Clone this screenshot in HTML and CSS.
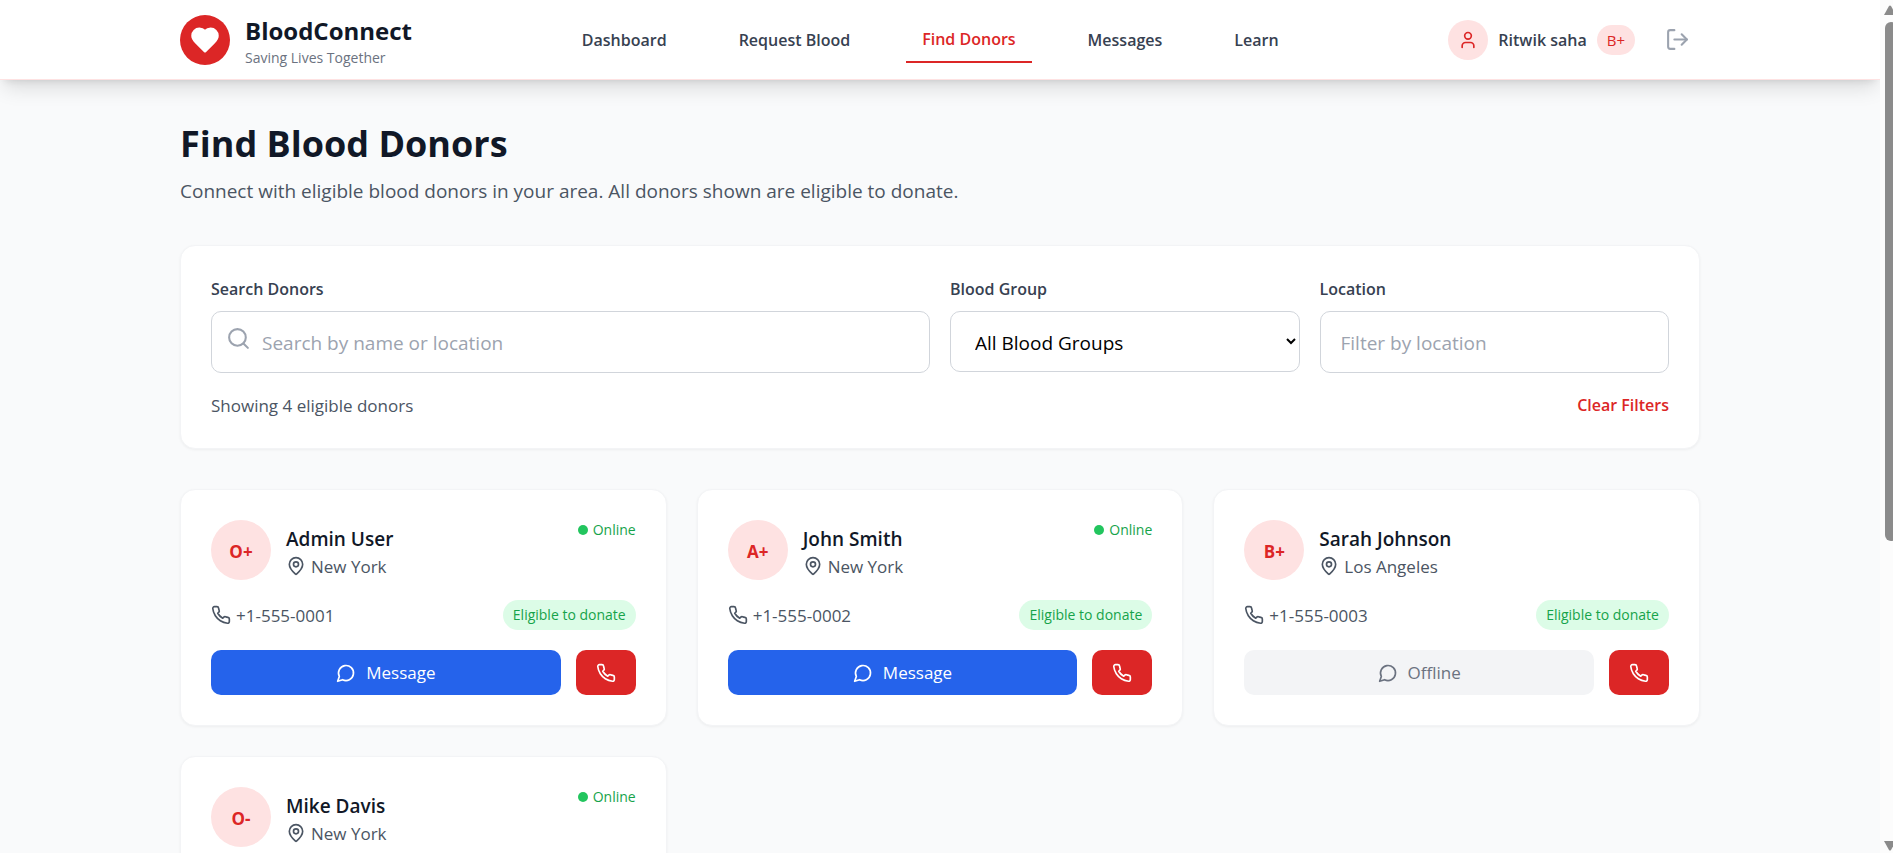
FILE: index.html
```html
<!DOCTYPE html>
<html lang="en">
<head>
<meta charset="utf-8">
<meta name="viewport" content="width=device-width, initial-scale=1">
<title>BloodConnect - Find Donors</title>
<link rel="stylesheet" href="styles.css">
</head>
<body>
<svg class="sprite" aria-hidden="true">
  <symbol id="i-heart" viewBox="0 0 24 24"><path d="M19 14c1.49-1.46 3-3.21 3-5.5A5.5 5.5 0 0 0 16.5 3c-1.76 0-3 .5-4.5 2-1.5-1.5-2.74-2-4.5-2A5.5 5.5 0 0 0 2 8.500c0 2.300 1.500 4.050 3 5.500l7 7Z"/></symbol>
  <symbol id="i-user" viewBox="0 0 24 24"><path d="M19 21v-2a4 4 0 0 0-4-4H9a4 4 0 0 0-4 4v2"/><circle cx="12" cy="7" r="4"/></symbol>
  <symbol id="i-logout" viewBox="0 0 24 24"><path d="M9 21H5a2 2 0 0 1-2-2V5a2 2 0 0 1 2-2h4"/><path d="m16 17 5-5-5-5"/><path d="M21 12H9"/></symbol>
  <symbol id="i-search" viewBox="0 0 24 24"><circle cx="11" cy="11" r="8"/><path d="m21 21-4.300-4.300"/></symbol>
  <symbol id="i-pin" viewBox="0 0 24 24"><path d="M20 10c0 4.993-5.539 10.193-7.399 11.799a1 1 0 0 1-1.202 0C9.539 20.193 4 14.993 4 10a8 8 0 0 1 16 0"/><circle cx="12" cy="10" r="3"/></symbol>
  <symbol id="i-phone" viewBox="0 0 24 24"><path d="M22 16.920v3a2 2 0 0 1-2.180 2 19.790 19.790 0 0 1-8.630-3.070 19.500 19.500 0 0 1-6-6 19.790 19.790 0 0 1-3.070-8.670A2 2 0 0 1 4.110 2h3a2 2 0 0 1 2 1.720 12.840 12.840 0 0 0 .700 2.810 2 2 0 0 1-.450 2.110L8.090 9.910a16 16 0 0 0 6 6l1.270-1.270a2 2 0 0 1 2.110-.450 12.840 12.840 0 0 0 2.810.700A2 2 0 0 1 22 16.920z"/></symbol>
  <symbol id="i-message" viewBox="0 0 24 24"><path d="M7.900 20A9 9 0 1 0 4 16.100L2 22Z"/></symbol>
</svg>
<div class="window">
  <div class="page">
    <header class="header">
      <div class="container header-row">
        <a class="brand" href="#">
          <span class="brand-mark"><svg class="icon icon-heart"><use href="#i-heart"/></svg></span>
          <span class="brand-text">
            <span class="brand-name">BloodConnect</span>
            <span class="brand-tag">Saving Lives Together</span>
          </span>
        </a>
        <nav class="nav">
          <a class="nav-link" href="#">Dashboard</a>
          <a class="nav-link" href="#">Request Blood</a>
          <a class="nav-link nav-link-active" href="#" aria-current="page">Find Donors</a>
          <a class="nav-link" href="#">Messages</a>
          <a class="nav-link" href="#">Learn</a>
        </nav>
        <div class="account">
          <span class="account-avatar"><svg class="icon"><use href="#i-user"/></svg></span>
          <span class="account-name">Ritwik saha</span>
          <span class="account-group">B+</span>
          <button class="logout" type="button" aria-label="Log out"><svg class="icon icon-lg"><use href="#i-logout"/></svg></button>
        </div>
      </div>
    </header>
    <main class="container main">
      <h1 class="title">Find Blood Donors</h1>
      <p class="lead">Connect with eligible blood donors in your area. All donors shown are eligible to donate.</p>
      <section class="filters">
        <div class="filter-grid">
          <div class="field field-wide">
            <label class="label" for="search">Search Donors</label>
            <div class="search">
              <svg class="icon icon-lg search-icon"><use href="#i-search"/></svg>
              <input class="control control-search" id="search" type="text" placeholder="Search by name or location">
            </div>
          </div>
          <div class="field">
            <label class="label" for="group">Blood Group</label>
            <select class="control control-select" id="group"><option>All Blood Groups</option><option>A+</option><option>B+</option><option>O+</option><option>O-</option></select>
          </div>
          <div class="field">
            <label class="label" for="location">Location</label>
            <input class="control" id="location" type="text" placeholder="Filter by location">
          </div>
        </div>
        <div class="filter-foot">
          <span>Showing 4 eligible donors</span>
          <button class="clear" type="button">Clear Filters</button>
        </div>
      </section>
      <section class="donors">
        <article class="card">
          <div class="card-top">
            <span class="group">O+</span>
            <div class="who">
              <h2 class="name">Admin User</h2>
              <p class="place"><svg class="icon"><use href="#i-pin"/></svg>New York</p>
            </div>
            <span class="online">Online</span>
          </div>
          <div class="card-mid">
            <span class="phone"><svg class="icon"><use href="#i-phone"/></svg>+1-555-0001</span>
            <span class="eligible">Eligible to donate</span>
          </div>
          <div class="actions">
            <button class="btn btn-message" type="button"><svg class="icon"><use href="#i-message"/></svg>Message</button>
            <button class="btn btn-call" type="button" aria-label="Call Admin User"><svg class="icon"><use href="#i-phone"/></svg></button>
          </div>
        </article>
        <article class="card">
          <div class="card-top">
            <span class="group">A+</span>
            <div class="who">
              <h2 class="name">John Smith</h2>
              <p class="place"><svg class="icon"><use href="#i-pin"/></svg>New York</p>
            </div>
            <span class="online">Online</span>
          </div>
          <div class="card-mid">
            <span class="phone"><svg class="icon"><use href="#i-phone"/></svg>+1-555-0002</span>
            <span class="eligible">Eligible to donate</span>
          </div>
          <div class="actions">
            <button class="btn btn-message" type="button"><svg class="icon"><use href="#i-message"/></svg>Message</button>
            <button class="btn btn-call" type="button" aria-label="Call John Smith"><svg class="icon"><use href="#i-phone"/></svg></button>
          </div>
        </article>
        <article class="card">
          <div class="card-top">
            <span class="group">B+</span>
            <div class="who">
              <h2 class="name">Sarah Johnson</h2>
              <p class="place"><svg class="icon"><use href="#i-pin"/></svg>Los Angeles</p>
            </div>
          </div>
          <div class="card-mid">
            <span class="phone"><svg class="icon"><use href="#i-phone"/></svg>+1-555-0003</span>
            <span class="eligible">Eligible to donate</span>
          </div>
          <div class="actions">
            <button class="btn btn-message" type="button" disabled><svg class="icon"><use href="#i-message"/></svg>Offline</button>
            <button class="btn btn-call" type="button" aria-label="Call Sarah Johnson"><svg class="icon"><use href="#i-phone"/></svg></button>
          </div>
        </article>
        <article class="card">
          <div class="card-top">
            <span class="group">O-</span>
            <div class="who">
              <h2 class="name">Mike Davis</h2>
              <p class="place"><svg class="icon"><use href="#i-pin"/></svg>New York</p>
            </div>
            <span class="online">Online</span>
          </div>
        </article>
      </section>
    </main>
  </div>
  <div class="scrollbar" aria-hidden="true">
    <svg class="scroll-arrow" viewBox="0 0 12 10"><path d="M0 10 5 1Q6 0 7 1L12 10Z"/></svg>
    <div class="scroll-track"><div class="scroll-thumb"></div></div>
    <svg class="scroll-arrow" viewBox="0 0 12 10"><path d="M0 0 5 9Q6 10 7 9L12 0Z"/></svg>
  </div>
</div>
</body>
</html>
```
FILE: styles.css
```css
*, *::before, *::after { box-sizing: border-box; }

body {
  margin: 0;
  background: #f9fafb;
  color: #111827;
  font-family: "Open Sans", "Noto Sans", sans-serif;
  font-size: 17px;
  line-height: 25px;
}

h1, h2, p { margin: 0; }
a { color: inherit; text-decoration: none; }
button, input, select { font: inherit; }
button { border: 0; cursor: pointer; }

.sprite { display: none; }

.icon {
  flex: none;
  width: 20px;
  height: 20px;
  fill: none;
  stroke: currentColor;
  stroke-width: 2;
  stroke-linecap: round;
  stroke-linejoin: round;
}
.icon-lg { width: 25px; height: 25px; }
.icon-heart { width: 30px; height: 30px; fill: #fff; }

.window { display: flex; height: 100vh; overflow: hidden; }
.page { flex: 1; min-width: 0; overflow: hidden; }

.scrollbar {
  display: flex;
  flex-direction: column;
  width: 13px;
  padding: 5px 0 2px 4px;
  overflow: hidden;
  background: #fcfcfc;
}
.scroll-arrow { flex: none; width: 12px; height: 10px; fill: #8b8b8b; }
.scroll-track { flex: 1; padding: 7px 0 0 1px; }
.scroll-thumb { width: 12px; height: 63.4%; border-radius: 6px; background: #8b8b8b; }

.container { max-width: 1600px; margin: 0 auto; padding: 0 40px; }

.header {
  position: relative;
  background: #fff;
  border-bottom: 1px solid #fee2e2;
  box-shadow: 0 12px 19px -4px rgba(0, 0, 0, .12), 0 5px 8px -5px rgba(0, 0, 0, .12);
}
.header-row { display: flex; align-items: center; justify-content: space-between; height: 79px; }

.brand { display: flex; align-items: center; gap: 15px; }
.brand-mark {
  display: flex;
  align-items: center;
  justify-content: center;
  width: 50px;
  height: 50px;
  border-radius: 50%;
  background: #dc2626;
  color: #fff;
}
.brand-text { display: flex; flex-direction: column; padding-top: 2px; }
.brand-name { font-size: 24px; line-height: 35px; font-weight: 700; }
.brand-tag { font-size: 14px; line-height: 20px; color: #6b7280; }

.nav { display: flex; align-items: center; gap: 40px; }
.nav-link { padding: 11px 16px 9px; color: #374151; font-size: 16px; font-weight: 600; }
.nav-link-active { color: #dc2626; border-bottom: 2px solid #dc2626; }

.account { display: flex; align-items: center; gap: 10px; }
.account-avatar {
  display: flex;
  align-items: center;
  justify-content: center;
  width: 40px;
  height: 40px;
  border-radius: 50%;
  background: #fee2e2;
  color: #dc2626;
}
.account-name { padding-top: 2px; color: #374151; font-size: 16px; font-weight: 600; }
.account-group {
  padding: 5px 10px;
  border-radius: 15px;
  background: #fee2e2;
  color: #dc2626;
  font-size: 15px;
  line-height: 20px;
}
.logout { display: flex; margin-left: 10px; padding: 10px; background: none; color: #9ca3af; }

.main { padding-top: 41px; }
.title { margin-bottom: 10px; font-size: 36px; line-height: 45px; font-weight: 700; }
.lead { margin-bottom: 39px; color: #4b5563; font-size: 19px; line-height: 30px; }

.filters, .card {
  padding: 30px;
  border: 1px solid #f3f4f6;
  border-radius: 15px;
  background: #fff;
  box-shadow: 0 1px 3px rgba(0, 0, 0, .05);
}
.filters { margin-bottom: 40px; }
.filter-grid { display: grid; grid-template-columns: repeat(4, minmax(0, 1fr)); align-items: start; gap: 20px; }
.field-wide { grid-column: span 2; }
.label { display: block; margin-bottom: 8px; color: #374151; font-size: 16px; line-height: 27px; font-weight: 600; }
.control {
  display: block;
  width: 100%;
  height: 62px;
  padding: 16px 20px 14px;
  border: 1px solid #d1d5db;
  border-radius: 10px;
  background: #fff;
  color: #000;
  font-size: 19px;
}
.control::placeholder { color: #9ca3af; opacity: 1; }
.control-select { height: 61px; }
.search { position: relative; }
.search-icon { position: absolute; top: 15px; left: 15px; color: #9ca3af; }
.control-search { padding-left: 50px; }
.filter-foot { display: flex; justify-content: space-between; margin-top: 20px; color: #4b5563; }
.clear { padding: 0; background: none; color: #dc2626; font-size: 16px; font-weight: 600; }

.donors { display: grid; grid-template-columns: repeat(3, minmax(0, 1fr)); gap: 30px; }
.card-top { display: flex; align-items: flex-start; gap: 15px; margin-bottom: 20px; }
.group {
  display: flex;
  align-items: center;
  justify-content: center;
  width: 60px;
  height: 60px;
  padding-top: 2px;
  border-radius: 50%;
  background: #fee2e2;
  color: #dc2626;
  font-weight: 700;
}
.who { flex: 1; align-self: center; padding-top: 2px; }
.name { font-size: 19px; line-height: 30px; font-weight: 600; }
.place, .phone { display: flex; align-items: center; gap: 5px; color: #4b5563; }
.online { display: flex; align-items: center; gap: 5px; color: #16a34a; font-size: 14px; line-height: 20px; }
.online::before { content: ""; width: 10px; height: 10px; border-radius: 50%; background: #22c55e; }
.card-mid { display: flex; align-items: center; justify-content: space-between; margin-bottom: 20px; }
.eligible {
  padding: 5px 10px;
  border-radius: 15px;
  background: #dcfce7;
  color: #16a34a;
  font-size: 14px;
  line-height: 20px;
}
.actions { display: flex; gap: 15px; }
.btn {
  display: flex;
  align-items: center;
  justify-content: center;
  gap: 10px;
  padding: 10px 20px;
  border-radius: 10px;
  color: #fff;
}
.btn-message { flex: 1; background: #2563eb; }
.btn-message:disabled { background: #f3f4f6; color: #6b7280; cursor: default; }
.btn-call { background: #dc2626; }
```
